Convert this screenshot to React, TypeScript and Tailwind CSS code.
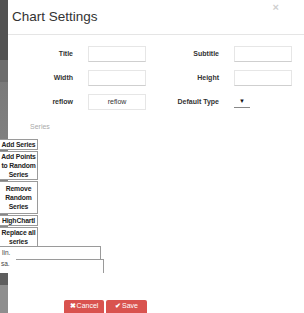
import React from "react";

const font = { fontFamily: '"Liberation Sans", Arial, sans-serif' };

function Field({ label, children }: { label: string; children: React.ReactNode }) {
  return (
    <>
      <div className="text-right text-[7px] font-bold text-[#333]">{label}</div>
      <div className="flex items-center">{children}</div>
    </>
  );
}

function TextBox() {
  return <div className="h-[16px] w-[58px] border border-[#e6e6e6] border-b-[#cfcfcf] bg-white" />;
}

function StackButton({ children }: { children: React.ReactNode }) {
  return (
    <div className="w-[39px] border border-[#9a9a9a] bg-white text-center text-[6.8px] font-bold leading-[9px] tracking-[-0.15px] text-[#222]">
      {children}
    </div>
  );
}

export default function App() {
  return (
    <div className="flex h-[313px] w-[304px] overflow-hidden bg-white" style={font}>
      {/* backdrop strip showing behind the dialog */}
      <div className="flex w-[8px] shrink-0 flex-col">
        <div className="h-[60px] bg-[#525252]" />
        <div className="h-[22px] bg-[#6c6c6c]" />
        <div className="h-[163px] bg-gradient-to-b from-[#7a7a7a] to-[#8a8a8a]" />
        <div className="h-[40px] bg-[#5e5e5e]" />
        <div className="flex-1 bg-[#8e8e8e]" />
      </div>

      <div className="relative flex flex-1 flex-col bg-white">
        <div className="flex h-[35px] shrink-0 items-center justify-between border-b border-[#e5e5e5] pl-[4px] pr-[25px]">
          <span className="text-[13.5px] text-[#333]">Chart Settings</span>
          <span className="-mt-[20px] text-[11px] font-bold text-[#cfcfcf]">×</span>
        </div>

        <div className="mt-[11px] grid grid-cols-[65px_58px_58px_58px] items-center gap-x-[15px] gap-y-[8px]">
          <Field label="Title"><TextBox /></Field>
          <Field label="Subtitle"><TextBox /></Field>
          <Field label="Width"><TextBox /></Field>
          <Field label="Height"><TextBox /></Field>
          <Field label="reflow">
            <div className="flex h-[16px] w-[58px] items-center justify-center border border-[#e6e6e6] text-[7px] text-[#333]">
              reflow
            </div>
          </Field>
          <Field label="Default Type">
            <div className="flex h-[11px] w-[16px] items-start justify-center border-b border-[#888] text-[6px] leading-[8px] text-[#111]">
              ▼
            </div>
          </Field>
        </div>

        <div className="mt-[12px] pl-[22px] text-[7px] text-[#aaa]">Series</div>

        <div className="-ml-[9px] mt-[6px] flex flex-col gap-[1px]">
          <StackButton>Add Series</StackButton>
          <StackButton>Add Points to Random Series</StackButton>
          <StackButton>
            <div className="py-[2px]">Remove Random Series</div>
          </StackButton>
          <StackButton>HighChartl</StackButton>
          <StackButton>Replace all series</StackButton>
          <div className="-mt-[2px] h-[14px] w-[102px] border border-[#9a9a9a] bg-white pl-[2px] text-[6.5px] leading-[11px] text-[#444]">lin.</div>
          <div className="-mt-[2px] h-[14px] w-[105px] border-r border-[#9a9a9a] bg-white pl-[2px] text-[6.5px] leading-[10px] text-[#444]">
            <div className="ml-[15px] -mb-[1px] border-t border-[#9a9a9a]" />
            sa.
          </div>
        </div>

        <div className="mt-auto flex gap-[2px] pl-[56px]">
          <button className="flex h-[13px] w-[40px] items-center justify-center gap-[1px] rounded-t-[2px] bg-[#d9534f] text-[7px] text-white">
            <span className="font-bold">✖</span>Cancel
          </button>
          <button className="flex h-[13px] w-[41px] items-center justify-center gap-[1px] rounded-t-[2px] bg-[#d9534f] text-[7px] text-white">
            <span className="font-bold">✔</span>Save
          </button>
        </div>
      </div>
    </div>
  );
}
